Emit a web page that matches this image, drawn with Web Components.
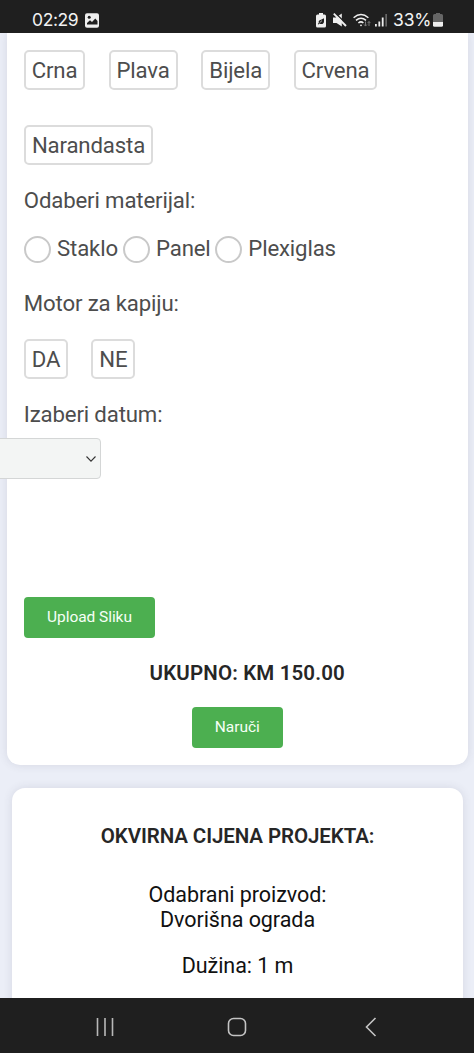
<!DOCTYPE html>
<html lang="bs">
<head>
<meta charset="utf-8">
<title>Konfigurator ograde</title>
<style>
html,body{margin:0;height:100%;overflow:hidden;background:#ebeef7}
body{font-family:Roboto,"Liberation Sans",sans-serif}
</style>
</head>
<body>
<phone-screen>
  <status-bar slot="top"></status-bar>
  <panel-card style="--mx:6.5px;--mr:6px;--r:0 0 13px 13px;height:732px">
    <option-row style="padding-top:17px;gap:23.6px">
      <option-chip style="width:61px">Crna</option-chip><option-chip style="width:69px">Plava</option-chip><option-chip style="width:69px">Bijela</option-chip><option-chip style="width:83.5px">Crvena</option-chip>
    </option-row>
    <option-row style="padding-top:35px"><option-chip style="width:129px">Narandasta</option-chip></option-row>
    <field-label style="padding-top:22px">Odaberi materijal:</field-label>
    <option-row style="padding-top:22px;gap:5px">
      <radio-option style="width:94px">Staklo</radio-option><radio-option style="width:87.3px">Panel</radio-option><radio-option>Plexiglas</radio-option>
    </option-row>
    <field-label style="padding-top:27px">Motor za kapiju:</field-label>
    <option-row style="padding-top:23px;gap:23.4px"><option-chip style="width:44px">DA</option-chip><option-chip style="width:44px">NE</option-chip></option-row>
    <field-label style="padding-top:22px">Izaberi datum:</field-label>
    <date-select></date-select>
    <green-button style="margin:118px 0 0 17.5px;width:131px">Upload Sliku</green-button>
    <card-heading style="padding:22px 0 0 20px;letter-spacing:.15px">UKUPNO: KM 150.00</card-heading>
    <green-button style="margin:21px auto 0;width:91px">Naruči</green-button>
  </panel-card>
  <panel-card style="--mx:12px;--mr:11px;--r:13px 13px 0 0;margin-top:23px;height:260px">
    <card-heading style="padding-top:35px;letter-spacing:-.09px">OKVIRNA CIJENA PROJEKTA:</card-heading>
    <summary-line style="padding-top:33px">Odabrani proizvod:</summary-line>
    <summary-line>Dvorišna ograda</summary-line>
    <summary-line style="padding-top:21px">Dužina: 1 m</summary-line>
  </panel-card>
  <nav-bar slot="bottom"></nav-bar>
</phone-screen>
<script>
const define = (name, html) => {
  const template = document.createElement('template');
  template.innerHTML = html;
  customElements.define(name, class extends HTMLElement {
    constructor() {
      super();
      this.attachShadow({mode: 'open'}).append(template.content.cloneNode(true));
    }
  });
};

define('phone-screen', `<style>
:host{display:flex;flex-direction:column;width:474px;height:1053px;overflow:hidden;background:#ebeef7}
main{flex:1;min-height:0;overflow:hidden;display:flex;flex-direction:column}
</style><slot name="top"></slot><main><slot></slot></main><slot name="bottom"></slot>`);

define('status-bar', `<style>
:host{display:flex;flex:none;box-sizing:border-box;height:33px;padding:7px 31px 0 32px;background:#1f1f1f;color:#f2f2f2;align-items:center;font:17.500px/20px Inter,Roboto,sans-serif}
svg{display:block;flex:none}
.time{width:53px;white-space:nowrap;letter-spacing:-.4px}
.right{margin-left:auto;display:flex;align-items:center}
.pct{width:39px;white-space:nowrap;margin-left:5px;letter-spacing:-.15px}
</style>
<span class="time">02:29</span>
<svg width="14" height="15" viewBox="0 0 14 15"><rect width="14" height="14.5" y=".3" rx="2" fill="#eee"/><circle cx="4.2" cy="4.2" r="1.5" fill="#1f1f1f"/><path d="M2 11.5V10l3-2.8 2 1.8 3.3-3.6L12.500 8v3.500z" fill="#1f1f1f"/></svg>
<div class="right">
<svg width="10" height="15" viewBox="0 0 10 15"><path d="M3 0h4v1.500h1.500Q10 1.500 10 3v10q0 1.500-1.500 1.500h-7Q0 14.500 0 13V3q0-1.500 1.500-1.500H3z" fill="#eee"/><path d="M8 5.200v3Q8 11 5.300 11q-1 0-1.700-.5L2.500 11.600l-.7-.7 1-1.100C2 6.500 5.500 7 8 5.200z" fill="#1f1f1f"/><path d="M3.700 9.700 6 7.600" stroke="#eee" stroke-width=".7"/></svg>
<svg width="14" height="14" viewBox="0 0 14 14" style="margin-left:7px"><path d="M0 4.500h3l5.800-4v13L3.500 10H0z" fill="#eee"/><path d="M2.500.300 14 11.500" stroke="#1f1f1f" stroke-width="1.400"/><path d="M.8.700 13 13" stroke="#eee" stroke-width="1.900"/></svg>
<svg width="18" height="15" viewBox="0 0 18 15" style="margin-left:6px" fill="none" stroke="#eee" stroke-width="1.500"><path d="M.6 4.700Q8 -1.700 15.400 4.700M3 7.400q5-4.300 10 0M5.400 10q2.600-2.200 5 0"/><circle cx="8" cy="12.300" r=".9" fill="#eee" stroke="none"/><path d="M12.500 8.500V13m-1.400-1.500 1.400 1.600 1.400-1.600M16 13V8.500m-1.400 1.600L16 8.500l1.400 1.600" stroke="#777" stroke-width="1"/></svg>
<svg width="13" height="14" viewBox="0 0 13 14" style="margin-left:4px"><path d="M0 11h1.800v2.500H0zM3.400 8.500h1.800v5H3.400zM6.800 4.500h1.800v9H6.800z" fill="#eee"/><path d="M10.300 1h1.700v12.500h-1.700z" fill="#666"/></svg>
<span class="pct">33%</span>
<svg width="10" height="14" viewBox="0 0 10 14" style="margin-left:1px"><path d="M3 0h4v1h1.500Q10 1 10 2.500V9.500H0V2.500Q0 1 1.500 1H3z" fill="#666"/><path d="M0 9h10v3.300q0 1.500-1.500 1.500h-7Q0 13.800 0 12.300z" fill="#eee"/></svg>
</div>`);

define('panel-card', `<style>
:host{display:flex;flex-direction:column;flex:none;box-sizing:border-box;margin-left:var(--mx);margin-right:var(--mr);border-radius:var(--r);background:#fff;box-shadow:0 0 10px rgba(60,60,80,.12)}
</style><slot></slot>`);

define('option-row', `<style>:host{display:flex;flex:none;align-items:flex-start;padding-left:17.5px}</style><slot></slot>`);

define('option-chip', `<style>
:host{display:block;flex:none;box-sizing:border-box;height:40px;border:2px solid #dcdcdc;border-radius:5px;text-align:center;font-size:22.200px;letter-spacing:-.15px;line-height:36px;color:#4d4d4d;white-space:nowrap}
</style><slot></slot>`);

define('field-label', `<style>:host{display:block;flex:none;padding-left:17.300px;font-size:22.200px;letter-spacing:-.15px;line-height:26px;color:#4d4d4d;white-space:nowrap}</style><slot></slot>`);

define('radio-option', `<style>
:host{display:flex;flex:none;align-items:center;height:28px;font-size:22.200px;letter-spacing:-.15px;line-height:26px;color:#4d4d4d;white-space:nowrap}
i{flex:none;box-sizing:border-box;width:27px;height:27px;border:2px solid #c9c9c9;border-radius:50%;margin-right:6px}
span{margin-top:-2px}
</style><i></i><span><slot></slot></span>`);

define('date-select', `<style>
:host{display:flex;flex:none;box-sizing:border-box;align-items:center;justify-content:flex-end;height:41px;width:109px;margin:11px 0 0 -14.500px;padding-right:4px;border:1.500px solid #d4d6d6;border-radius:4px;background:#f3f5f4}
</style><svg width="10" height="6" viewBox="0 0 10 6" fill="none" stroke="#333" stroke-width="1.100"><path d="M.5.500 5 5.200 9.500.500"/></svg>`);

define('green-button', `<style>
:host{display:block;flex:none;box-sizing:border-box;height:41px;border-radius:4px;background:#4caf50;color:#f6fff6;text-align:center;font-size:15.500px;letter-spacing:-.06px;line-height:41px;white-space:nowrap}
</style><slot></slot>`);

define('card-heading', `<style>:host{display:block;flex:none;text-align:center;font-size:20.500px;font-weight:600;line-height:26px;color:#262626;white-space:nowrap}</style><slot></slot>`);

define('summary-line', `<style>:host{display:block;flex:none;text-align:center;font-size:21.500px;letter-spacing:-.05px;line-height:25px;color:#111;white-space:nowrap}</style><slot></slot>`);

define('nav-bar', `<style>
:host{display:flex;flex:none;box-sizing:border-box;height:55px;padding:2px 97.500px 0 96px;align-items:center;background:#1f1f1f}
svg{display:block}
svg:nth-of-type(2){margin-left:113.300px}
svg:nth-of-type(3){margin-left:auto}
</style>
<svg width="18" height="18" viewBox="0 0 18 18" stroke="#b8b8b8" stroke-width="1.600"><path d="M1.500 0v18M9 0v18M16.500 0v18"/></svg>
<svg width="20" height="20" viewBox="0 0 20 20" fill="none" stroke="#c4c4c4" stroke-width="1.600"><rect x="1.500" y="1.500" width="17" height="17" rx="5"/></svg>
<svg width="12" height="20" viewBox="0 0 12 20" fill="none" stroke="#c4c4c4" stroke-width="1.600"><path d="M10.500 1 1.500 10l9 9"/></svg>`);
</script>
</body>
</html>
